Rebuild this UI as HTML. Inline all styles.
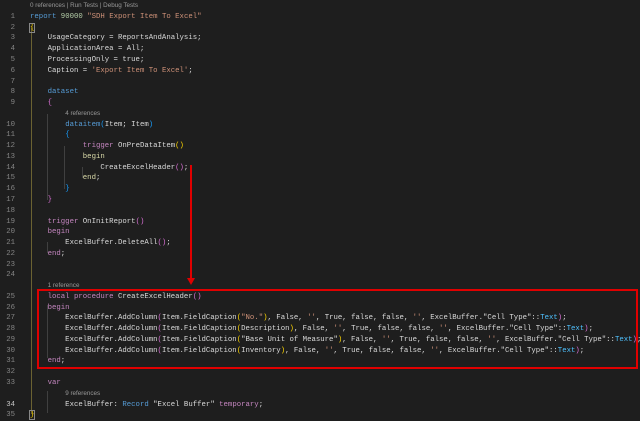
<!DOCTYPE html>
<html><head><meta charset="utf-8"><style>
html,body{margin:0;padding:0;background:#1e1e1e;width:640px;height:420px;overflow:hidden}
.w{position:absolute;top:1.2px;left:0;font-family:"Liberation Mono",monospace;font-size:7.33px;line-height:10.76px;white-space:pre;color:#dadada}
.n{position:absolute;left:0;width:15px;text-align:right;color:#858585}
.c{position:absolute;left:30px;top:0}
.l{font-family:"Liberation Sans",sans-serif;font-size:6.3px;color:#999}
.k{color:#569cd6}.p{color:#c586c0}.s{color:#ce9178}.m{color:#b5cea8}.f{color:#dcdcaa}.b{color:#4fc1ff}
.y{color:#ffd700}.v{color:#da70d6}.u{color:#179fff}
.g{position:absolute;width:1px;background:#6b6232}
.g2{position:absolute;width:1px;background:#404040}
</style></head><body>
<div class="g" style="left:31px;top:28px;height:386px"></div>
<div class="g2" style="left:47px;top:114px;height:86px"></div>
<div class="g2" style="left:64px;top:146px;height:43px"></div>
<div class="g2" style="left:82px;top:167px;height:11px"></div>
<div class="g2" style="left:47px;top:242px;height:11px"></div>
<div class="g2" style="left:47px;top:305px;height:53px"></div>
<div class="g2" style="left:47px;top:391px;height:22px"></div>
<div class="w"><div class="n">&nbsp;
1
2
3
4
5
6
7
8
9
&nbsp;
10
11
12
13
14
15
16
17
18
19
20
21
22
23
24
&nbsp;
25
26
27
28
29
30
31
32
33
&nbsp;
<span style="color:#c6c6c6">34</span>
35</div><div class="c"><span class="l">0 references | Run Tests | Debug Tests</span>
<span class="k">report</span> <span class="m">90000</span> <span class="s">"SDH Export Item To Excel"</span>
<span class="y" style="outline:1px solid #888">{</span>
    UsageCategory = ReportsAndAnalysis;
    ApplicationArea = All;
    ProcessingOnly = true;
    Caption = <span class="s">'Export Item To Excel'</span>;

    <span class="k">dataset</span>
    <span class="v">{</span>
        <span class="l">4 references</span>
        <span class="k">dataitem</span><span class="u">(</span>Item; Item<span class="u">)</span>
        <span class="u">{</span>
            <span class="p">trigger</span> OnPreDataItem<span class="y">()</span>
            <span class="f">begin</span>
                CreateExcelHeader<span class="v">()</span>;
            <span class="f">end</span>;
        <span class="u">}</span>
    <span class="v">}</span>

    <span class="p">trigger</span> OnInitReport<span class="v">()</span>
    <span class="p">begin</span>
        ExcelBuffer.DeleteAll<span class="v">()</span>;
    <span class="p">end</span>;


    <span class="l">1 reference</span>
    <span class="p">local procedure</span> CreateExcelHeader<span class="v">()</span>
    <span class="p">begin</span>
        ExcelBuffer.AddColumn<span class="v">(</span>Item.FieldCaption<span class="y">(</span><span class="s">"No."</span><span class="y">)</span>, False, <span class="s">''</span>, True, false, false, <span class="s">''</span>, ExcelBuffer."Cell Type"::<span class="b">Text</span><span class="v">)</span>;
        ExcelBuffer.AddColumn<span class="v">(</span>Item.FieldCaption<span class="y">(</span>Description<span class="y">)</span>, False, <span class="s">''</span>, True, false, false, <span class="s">''</span>, ExcelBuffer."Cell Type"::<span class="b">Text</span><span class="v">)</span>;
        ExcelBuffer.AddColumn<span class="v">(</span>Item.FieldCaption<span class="y">(</span>"Base Unit of Measure"<span class="y">)</span>, False, <span class="s">''</span>, True, false, false, <span class="s">''</span>, ExcelBuffer."Cell Type"::<span class="b">Text</span><span class="v">)</span>;
        ExcelBuffer.AddColumn<span class="v">(</span>Item.FieldCaption<span class="y">(</span>Inventory<span class="y">)</span>, False, <span class="s">''</span>, True, false, false, <span class="s">''</span>, ExcelBuffer."Cell Type"::<span class="b">Text</span><span class="v">)</span>;
    <span class="p">end</span>;

    <span class="p">var</span>
        <span class="l">9 references</span>
        ExcelBuffer: <span class="k">Record</span> "Excel Buffer" <span class="p">temporary</span>;
<span class="y" style="outline:1px solid #888">}</span></div></div>
<div style="position:absolute;left:37px;top:289px;width:597px;height:76px;border:2px solid #e00000"></div>
<div style="position:absolute;left:190px;top:165px;width:2px;height:114px;background:#e00000"></div>
<div style="position:absolute;left:187px;top:278px;width:0;height:0;border-left:4px solid transparent;border-right:4px solid transparent;border-top:7px solid #e00000"></div>
</body></html>
